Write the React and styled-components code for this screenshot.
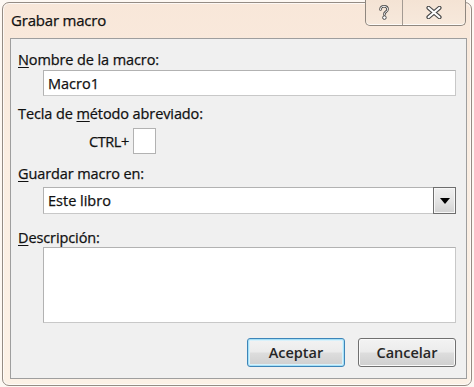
import React, {useState} from "react";
import styled, {createGlobalStyle} from "styled-components";

const GlobalStyle = createGlobalStyle`
  html, body {
    margin: 0;
    padding: 0;
    background: #fdf8f3;
  }
  body {
    font-family: "Open Sans", "Noto Sans", "Liberation Sans", sans-serif;
    -webkit-text-stroke: 0.25px currentColor;
  }
`;

const Frame = styled.div`
  box-sizing: border-box;
  width: 470px;
  height: 384px;
  margin: 2px 0 0 2px;
  border: 1px solid #958c84;
  border-radius: 7px;
  background: linear-gradient(180deg, #f8e7d9 0%, #fbeee2 40%, #fcf1e6 100%);
  box-shadow: inset 0 0 0 1px rgba(255, 255, 255, 0.7);
  display: flex;
  flex-direction: column;
  padding: 0 4px 6px 7px;
`;

const TitleBar = styled.div`
  height: 35px;
  display: flex;
  align-items: flex-start;
`;

const Title = styled.div`
  flex: 1;
  padding: 7px 0 0 1px;
  font-size: 15px;
  color: #111;
  letter-spacing: -0.2px;
`;

const CaptionGroup = styled.div`
  display: flex;
  margin-top: -3px;
  margin-right: 1px;
  border: 1px solid #8f877f;
  border-top: 0;
  border-radius: 0 0 5px 5px;
  background: linear-gradient(180deg, #f4e3d4, #f7e9dc);
  box-shadow: inset 0 -1px 0 rgba(255, 255, 255, 0.8);
`;

const CaptionButton = styled.div`
  width: ${p => p.$w}px;
  height: 25px;
  display: flex;
  align-items: center;
  justify-content: center;
  & + & {
    border-left: 1px solid #a39a92;
  }
`;

const Client = styled.div`
  flex: 1;
  box-sizing: border-box;
  border: 1px solid #9e9e9e;
  background: #f0f0f0;
  padding: 12px 10px 10px 7px;
  display: flex;
  flex-direction: column;
`;

const Label = styled.div`
  font-size: 14.5px;
  line-height: 18px;
  color: #111;
  margin-top: ${p => p.$mt || 0}px;
  letter-spacing: -0.1px;
  u {
    text-decoration: underline;
    text-underline-offset: 2px;
  }
`;

const Field = styled.div`
  box-sizing: border-box;
  margin-left: 25px;
  height: ${p => p.$h}px;
  margin-top: ${p => p.$mt || 0}px;
  background: #fff;
  border: 1px solid #b2b2b2;
  border-right-color: #c8c8c8;
  border-bottom-color: #c8c8c8;
  font-size: 14.5px;
  color: #111;
  padding-left: 4px;
  display: flex;
  align-items: center;
`;

const ShortcutRow = styled.div`
  display: flex;
  align-items: center;
  margin: 5px 0 0 71px;
  gap: 4px;
`;

const CtrlText = styled.span`
  font-size: 14.5px;
  color: #111;
  letter-spacing: -0.4px;
`;

const KeyBox = styled.div`
  box-sizing: border-box;
  width: 23px;
  height: 26px;
  background: #fff;
  border: 1px solid #b2b2b2;
`;

const Select = styled(Field)`
  padding-right: 0;
  justify-content: space-between;
`;

const DropButton = styled.div`
  box-sizing: border-box;
  width: 23px;
  height: 27px;
  margin: -1px -1px -1px 0;
  border: 1px solid #6e6e6e;
  box-shadow: inset 0 0 0 1px #f7f7f7;
  background: linear-gradient(180deg, #f0f0f0 0%, #e4e4e4 50%, #d2d2d2 100%);
  display: flex;
  align-items: center;
  justify-content: center;
`;

const Arrow = styled.div`
  width: 0;
  height: 0;
  border-left: 5px solid transparent;
  border-right: 5px solid transparent;
  border-top: 6px solid #000;
  margin-top: 1px;
`;

const Buttons = styled.div`
  display: flex;
  justify-content: flex-end;
  gap: 13px;
  margin-top: 15px;
`;

const Button = styled.button`
  box-sizing: border-box;
  width: 98px;
  height: 29px;
  font-family: inherit;
  font-size: 14.5px;
  font-weight: 600;
  color: #262626;
  border-radius: 3px;
  border: 1px solid ${p => (p.$primary ? "#3d85b8" : "#707070")};
  box-shadow: ${p =>
    p.$primary
      ? "inset 0 0 0 1px #a6e0f7, inset 0 0 0 2px #d8f1fb"
      : "inset 0 0 0 1px #fafafa"};
  background: linear-gradient(180deg, #f3f3f3 0%, #ebebeb 48%, #dddddd 52%, #cfcfcf 100%);
  padding: 0;
  cursor: pointer;
  -webkit-text-stroke: 0;
`;

const HelpIcon = () => (
  <svg width="12" height="15" viewBox="0 0 12 15">
    <path
      d="M2.5 4.5 C2.5 2 4 1.3 6 1.3 C8.3 1.3 9.6 2.6 9.6 4.3 C9.6 6 8.4 6.6 7.3 7.3 C6.6 7.8 6.4 8.3 6.4 9.4"
      fill="none"
      stroke="#4a4a4a"
      strokeWidth="2.6"
      strokeLinecap="round"
    />
    <path
      d="M2.5 4.5 C2.5 2 4 1.3 6 1.3 C8.3 1.3 9.6 2.6 9.6 4.3 C9.6 6 8.4 6.6 7.3 7.3 C6.6 7.8 6.4 8.3 6.4 9.4"
      fill="none"
      stroke="#fff"
      strokeWidth="1"
      strokeLinecap="round"
    />
    <circle cx="6.4" cy="12.6" r="1.8" fill="#fff" stroke="#4a4a4a" strokeWidth="1" />
  </svg>
);

const CloseIcon = () => (
  <svg width="16" height="13" viewBox="0 0 16 13">
    <path d="M2.5 1.8 L13.5 11.2 M13.5 1.8 L2.5 11.2" stroke="#4a4a4a" strokeWidth="4.2" strokeLinecap="round" />
    <path d="M2.5 1.8 L13.5 11.2 M13.5 1.8 L2.5 11.2" stroke="#fff" strokeWidth="2" strokeLinecap="round" />
  </svg>
);

const App = () => {
  const [name] = useState("Macro1");
  return (
    <>
      <GlobalStyle />
      <Frame>
        <TitleBar>
          <Title>Grabar macro</Title>
          <CaptionGroup>
            <CaptionButton $w={36}>
              <HelpIcon />
            </CaptionButton>
            <CaptionButton $w={62}>
              <CloseIcon />
            </CaptionButton>
          </CaptionGroup>
        </TitleBar>
        <Client>
          <Label>
            <u>N</u>ombre de la macro:
          </Label>
          <Field $h={26} $mt={1}>{name}</Field>
          <Label $mt={9}>
            Tecla de <u>m</u>étodo abreviado:
          </Label>
          <ShortcutRow>
            <CtrlText>CTRL+</CtrlText>
            <KeyBox />
          </ShortcutRow>
          <Label $mt={11}>
            <u>G</u>uardar macro en:
          </Label>
          <Select $h={27} $mt={4}>
            <span>Este libro</span>
            <DropButton>
              <Arrow />
            </DropButton>
          </Select>
          <Label $mt={15}>
            <u>D</u>escripción:
          </Label>
          <Field $h={76} />
          <Buttons>
            <Button $primary>Aceptar</Button>
            <Button>Cancelar</Button>
          </Buttons>
        </Client>
      </Frame>
    </>
  );
};

export default App;
